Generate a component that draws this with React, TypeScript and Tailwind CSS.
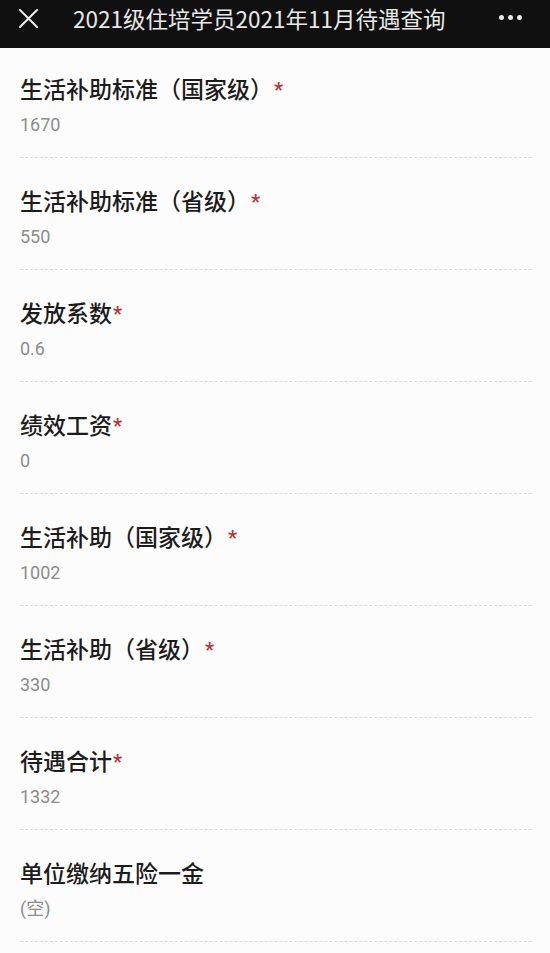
import React from "react";

const rows: { label: string; value: string; required: boolean }[] = [
  { label: "生活补助标准（国家级）", value: "1670", required: true },
  { label: "生活补助标准（省级）", value: "550", required: true },
  { label: "发放系数", value: "0.6", required: true },
  { label: "绩效工资", value: "0", required: true },
  { label: "生活补助（国家级）", value: "1002", required: true },
  { label: "生活补助（省级）", value: "330", required: true },
  { label: "待遇合计", value: "1332", required: true },
  { label: "单位缴纳五险一金", value: "(空)", required: false },
];

const cjk = { fontFamily: '"Noto Sans CJK SC", "Noto Sans", sans-serif' };
const val = { fontFamily: 'Roboto, "Noto Sans CJK SC", sans-serif' };

export default function App() {
  return (
    <div className="w-[550px] h-[953px] bg-[#fcfcfc] overflow-hidden" style={cjk}>
      <div className="h-[48px] bg-[#101010] flex items-center pb-[12px] relative">
        <div className="w-[73px] flex items-center pl-[18px]">
          <svg width="21" height="21" viewBox="0 0 21 21" fill="none">
            <path d="M2 2 L19 19 M19 2 L2 19" stroke="#ececec" strokeWidth="2" strokeLinecap="round" />
          </svg>
        </div>
        <div className="text-[22.5px] leading-[28px] text-[#e8e8e8] whitespace-nowrap">
          2021级住培学员2021年11月待遇查询
        </div>
        <div className="absolute left-[499px] top-[15px] flex gap-[4px]">
          <span className="w-[5px] h-[5px] rounded-full bg-[#eaeaea]" />
          <span className="w-[5px] h-[5px] rounded-full bg-[#eaeaea]" />
          <span className="w-[5px] h-[5px] rounded-full bg-[#eaeaea]" />
        </div>
      </div>
      <div>
        {rows.map((r, i) => (
          <div key={i} className={i === 0 ? "pt-[25px]" : "pt-[27px]"}>
            <div className="px-[20px]">
              <div className="text-[23px] leading-[30px] font-medium text-[#1c1c1c] whitespace-nowrap flex items-center">
                <span>{r.label}</span>
                {r.required && (
                  <span className="text-[#b5383c] text-[20px] leading-[30px] font-bold ml-[1px] relative top-[2px]" style={val}>*</span>
                )}
              </div>
              <div className="mt-[10px] text-[18px] leading-[24px] text-[#8c8c8c]" style={val}>
                {r.value}
              </div>
            </div>
            <div className="mt-[20px] mx-[20px] w-[512px] border-t border-dashed border-[#dcdcdc]" />
          </div>
        ))}
      </div>
    </div>
  );
}
